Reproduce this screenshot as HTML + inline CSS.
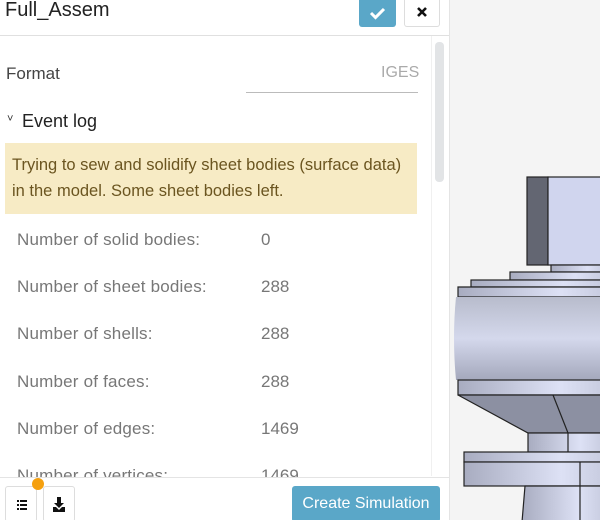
<!DOCTYPE html>
<html><head><style>
*{margin:0;padding:0;box-sizing:border-box}
body{width:600px;height:520px;overflow:hidden;background:#f4f4f4;font-family:"Liberation Sans",sans-serif;position:relative}
.panel{position:absolute;left:0;top:0;width:450px;height:520px;background:#fff;border-right:1px solid #e4e4e4;overflow:hidden}
.t{position:absolute;white-space:nowrap}
.row{position:absolute;left:17px;font-size:17px;color:#777;letter-spacing:.2px}
.val{position:absolute;left:261px;font-size:17px;color:#777}
</style></head><body>
<svg style="position:absolute;left:450px;top:0" width="150" height="520" viewBox="450 0 150 520">
<defs>
<linearGradient id="c" x1="0" y1="0" x2="0" y2="1"><stop offset="0" stop-color="#b8bccc"/><stop offset=".5" stop-color="#d4d8ec"/><stop offset="1" stop-color="#a4a8bc"/></linearGradient>
<linearGradient id="h" x1="0" y1="0" x2="1" y2="0"><stop offset="0" stop-color="#a8acc0"/><stop offset=".7" stop-color="#dde1f5"/><stop offset="1" stop-color="#c8cce0"/></linearGradient>
</defs>
<g stroke="#222" stroke-width="1.2">
<rect x="527" y="177" width="21" height="88" fill="#636672"/>
<rect x="548" y="177" width="55" height="88" fill="#d0d5ee"/>
<rect x="551" y="265" width="52" height="7" fill="url(#h)"/>
<rect x="510" y="272" width="93" height="8" fill="url(#h)"/>
<rect x="471" y="280" width="132" height="7" fill="url(#h)"/>
<path d="M458 287 H603 V297 H458 Z" fill="url(#h)"/>
<path d="M456 297 H603 V380 H456 Q452 338 456 297 Z" fill="url(#c)" stroke="none"/>
<rect x="458" y="380" width="145" height="15" fill="url(#h)"/>
<path d="M458 395 H603 V433 H528 Z" fill="#8c90a2"/>
<rect x="528" y="433" width="75" height="19" fill="url(#h)"/>
<rect x="464" y="452" width="139" height="10" fill="url(#h)"/>
<rect x="464" y="462" width="139" height="24" fill="url(#h)"/>
<path d="M525 486 H603 V522 H522 Z" fill="url(#h)"/>
<line x1="553" y1="395" x2="568" y2="433"/>
<line x1="568" y1="433" x2="568" y2="452"/>
<line x1="580" y1="462" x2="580" y2="522"/>
</g>
</svg>
<div class="panel">
<div class="t" style="left:5px;top:-1px;font-size:20px;color:#222">Full_Assem</div>
<div style="position:absolute;left:359px;top:0;width:37px;height:27px;background:#5aa7c8;border-radius:0 0 3px 3px">
<svg width="37" height="27"><path d="M12 13 L16.5 17.5 L25 9" stroke="#fff" stroke-width="3" fill="none"/></svg></div>
<div style="position:absolute;left:404px;top:0;width:36px;height:27px;border:1px solid #ddd;border-top:none;border-radius:0 0 3px 3px">
<svg width="34" height="26"><path d="M13 8 L21 16 M21 8 L13 16" stroke="#111" stroke-width="2.6"/></svg></div>
<div style="position:absolute;left:0;top:35px;width:450px;height:1px;background:#e0e0e0"></div>
<div style="position:absolute;left:435px;top:42px;width:9px;height:140px;background:#e2e4e6;border-radius:4px"></div>
<div style="position:absolute;left:431px;top:36px;width:1px;height:440px;background:#f0f0f0"></div>
<div class="t" style="left:6px;top:64px;font-size:17px;color:#444">Format</div>
<div class="t" style="left:381px;top:64px;font-size:16px;color:#aaa">IGES</div>
<div style="position:absolute;left:246px;top:92px;width:172px;height:1px;background:#bbb"></div>
<div class="t" style="left:7px;top:113px;font-size:11px;color:#333">˅</div>
<div class="t" style="left:22px;top:111px;font-size:18px;color:#222">Event log</div>
<div style="position:absolute;left:5px;top:143px;width:412px;height:71px;background:#f7ebc5;padding:9px 7px;font-size:16.5px;line-height:26px;color:#6b5520;white-space:nowrap">Trying to sew and solidify sheet bodies (surface data)<br>in the model. Some sheet bodies left.</div>
<div class="row" style="top:230px">Number of solid bodies:</div><div class="val" style="top:230px">0</div>
<div class="row" style="top:277px">Number of sheet bodies:</div><div class="val" style="top:277px">288</div>
<div class="row" style="top:324px">Number of shells:</div><div class="val" style="top:324px">288</div>
<div class="row" style="top:372px">Number of faces:</div><div class="val" style="top:372px">288</div>
<div class="row" style="top:419px">Number of edges:</div><div class="val" style="top:419px">1469</div>
<div class="row" style="top:466px">Number of vertices:</div><div class="val" style="top:466px">1469</div>
<div style="position:absolute;left:0;top:477px;width:450px;height:43px;background:#fff;border-top:1px solid #e4e4e4"></div>
<div style="position:absolute;left:5px;top:486px;width:32px;height:36px;border:1px solid #ddd;border-radius:3px">
<svg width="30" height="34"><g fill="#111"><rect x="11" y="13" width="2" height="2"/><rect x="14" y="13" width="7" height="2"/><rect x="11" y="17" width="2" height="2"/><rect x="14" y="17" width="7" height="2"/><rect x="11" y="21" width="2" height="2"/><rect x="14" y="21" width="7" height="2"/></g></svg></div>
<div style="position:absolute;left:43px;top:486px;width:32px;height:36px;border:1px solid #ddd;border-radius:3px">
<svg width="30" height="34"><g fill="#111"><rect x="13" y="10" width="4" height="6"/><path d="M10 16 H20 L15 21 Z"/><path d="M9 20 H12 L15 23 L18 20 H21 V25 H9 Z"/></g></svg></div>
<div style="position:absolute;left:32px;top:478px;width:12px;height:12px;border-radius:50%;background:#f5a00f"></div>
<div style="position:absolute;left:292px;top:486px;width:148px;height:36px;background:#5aa7c8;border-radius:3px;color:#fff;font-size:16px;text-align:center;line-height:36px">Create Simulation</div>
</div>
</body></html>
